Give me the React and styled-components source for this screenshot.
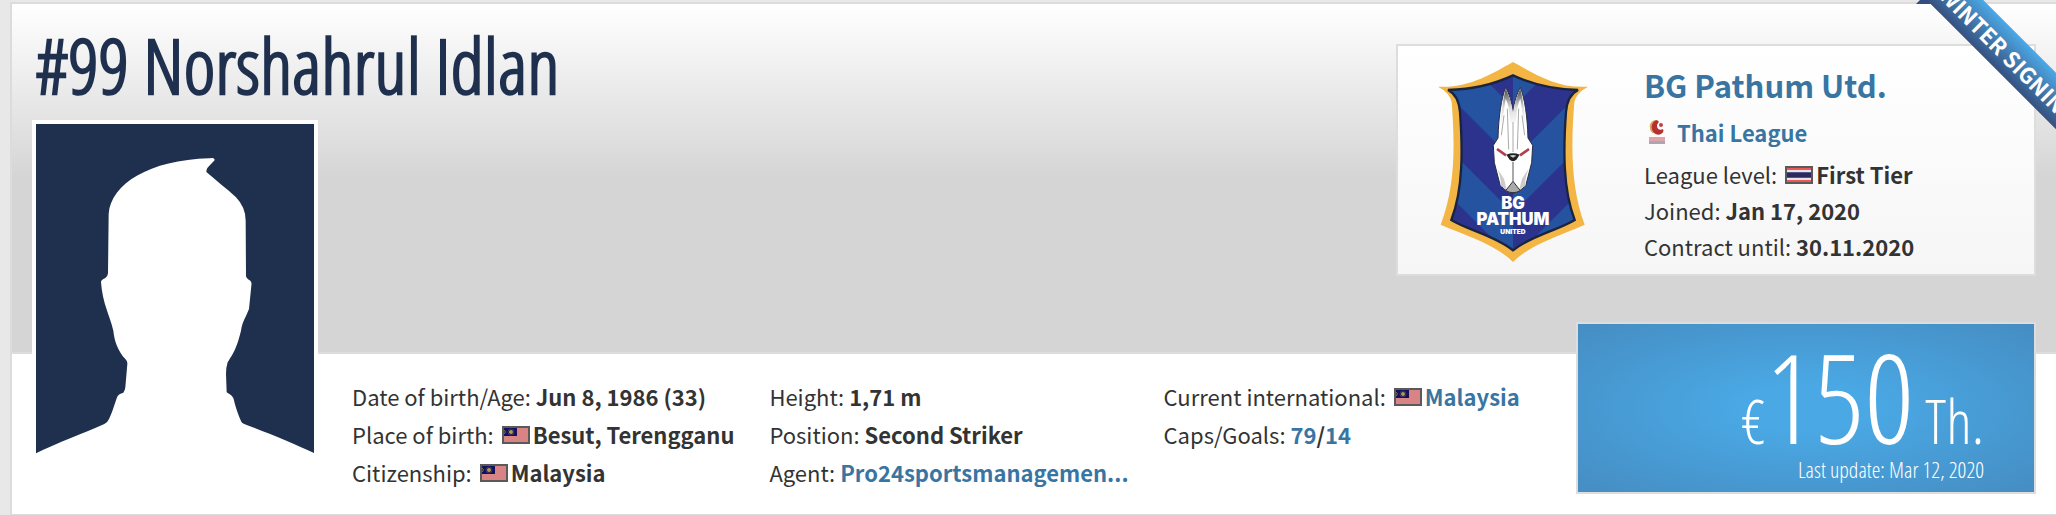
import React from 'react';

import styled, { createGlobalStyle } from 'styled-components';

const GlobalStyle = createGlobalStyle`
    * {
        box-sizing: border-box;
    }

    body {
        margin: 0;
        background: #e8e8e8;
        color: #333;
        font-family: "Source Sans Pro", "Noto Sans CJK SC", sans-serif;
        font-size: 22px;
    }
`;

const Malaysia = () => (
    <Flag viewBox="0 0 24 14" preserveAspectRatio="none" role="img" aria-label="Malaysia">
        <rect width="24" height="14" fill="#d98484" />
        <rect width="13" height="8" fill="#11115e" />
        <path d="M0 2Q3 4 0 6" fill="none" stroke="#8a7a3c" strokeWidth="1" />
        <circle cx="7" cy="4" r="2" fill="#b59a45" />
        <circle cx="7" cy="4" r="3" fill="none" stroke="#3b3560" strokeWidth="1" />
    </Flag>
);

const Thailand = () => (
    <Flag viewBox="0 0 24 14" preserveAspectRatio="none" role="img" aria-label="Thailand">
        <rect width="24" height="14" fill="#e85a55" />
        <rect y="2" width="24" height="10" fill="#e9e3e8" />
        <rect y="4" width="24" height="6" fill="#57528a" />
        <rect y="5" width="24" height="4" fill="#2b2a5c" />
    </Flag>
);

const LeagueLogo = () => (
    <LeagueMark viewBox="0 0 18 26" aria-hidden="true">
        <path d="M2 9C1 5 4 1 8 1L7 5C5 8 6 12 9 14C5 15 2 13 2 9Z" fill="#dca25a" />
        <path d="M9 1C5 2 3 6 4 10C5 14 9 17 13 15C15 14 16 12 15 10C12 12 9 10 9 7C9 5 10 4 11 3Z" fill="#b5302f" />
        <circle cx="13" cy="6" r="2" fill="#c2403d" />
        <rect x="1" y="18" width="16" height="4" fill="#e0a3a6" />
        <rect x="1" y="22" width="16" height="3" fill="#a9a5bb" />
    </LeagueMark>
);

const Portrait = () => (
    <svg viewBox="0 0 834 1083" role="img" aria-label="Norshahrul Idlan">
        <rect width="834" height="1083" fill="#1f304e" />
        <path
            fill="#fff"
            d="M0 988C60 958 150 925 205 900Q215 895 219 885C232 860 238 830 245 816Q248 810 262 806Q267 800 268 790L274 720Q275 712 268 705C245 680 235 650 232 620C220 570 200 540 195 475Q194 468 208 462Q215 458 216 448L218 270C225 180 340 108 520 103L530 102Q540 105 533 112L520 125Q508 135 512 145C540 170 570 192 600 220Q629 250 629 290L630 455Q630 463 643 470Q648 475 646 485L639 555C625 590 620 590 615 620C600 680 590 690 575 715Q570 730 570 750L572 805Q590 815 593 825C600 855 610 880 616 893Q618 898 640 906C710 932 780 962 834 987V1083H0Z"
        />
    </svg>
);

const Crest = () => (
    <CrestArt viewBox="0 0 450 600" role="img" aria-label="BG Pathum Utd.">
        <defs>
            <clipPath id="shield">
                <path d="M225 40C170 66 100 82 30 84Q62 100 66 150C74 260 76 380 40 474C90 505 170 520 225 565C280 520 360 505 410 474C374 380 376 260 384 150Q388 100 420 84C350 82 280 66 225 40Z" />
            </clipPath>
            <linearGradient id="ear" x1="0" y1="0" x2="0" y2="1">
                <stop offset="0" stopColor="#444" />
                <stop offset="0.5" stopColor="#ddd" />
                <stop offset="1" stopColor="#fff" />
            </linearGradient>
        </defs>
        <path
            fill="#f3b544"
            d="M225 0C160 36 90 80 0 74Q35 92 41 120C50 240 54 370 8 488C80 520 170 545 225 600C280 545 370 520 440 488C396 370 400 240 409 120Q415 92 450 74C360 80 290 36 225 0Z"
        />
        <g clipPath="url(#shield)">
            <rect width="450" height="600" fill="#2b338c" />
            <path d="M0-89L225 136V293L0 68ZM0 228L225 453V591L0 366Z" fill="#2553a0" />
            <path d="M450-89L225 136V0ZM450 68L225 293V453L450 228ZM450 366L225 591V620H450Z" fill="#2553a0" />
        </g>
        <path
            fill="none"
            stroke="#1a2440"
            strokeWidth="7"
            d="M225 40C170 66 100 82 30 84Q62 100 66 150C74 260 76 380 40 474C90 505 170 520 225 565C280 520 360 505 410 474C374 380 376 260 384 150Q388 100 420 84C350 82 280 66 225 40Z"
        />
        <path
            fill="#fff"
            stroke="#252c4a"
            strokeWidth="3"
            d="M203 76C190 110 182 160 180 228L166 250L169 302L186 368Q205 392 225 393Q245 392 264 368L281 302L284 250L270 228C268 160 260 110 247 76C236 96 228 120 225 150C222 120 214 96 203 76Z"
        />
        <path d="M203 80Q190 130 188 195Q198 150 203 110Q214 130 216 180L225 185V150Q218 110 203 80ZM247 80Q260 130 262 195Q252 150 247 110Q236 130 234 180L225 185V150Q232 110 247 80Z" fill="url(#ear)" />
        <path d="M208 140L212 262M242 140L238 262M225 180V270M198 160L190 220M252 160L260 220" stroke="#aaa" strokeWidth="3" fill="none" />
        <path d="M177 261L204 280M273 261L246 280" stroke="#b0404c" strokeWidth="8" />
        <path d="M205 278Q225 270 245 278L236 292Q225 304 214 292Z" fill="#222" />
        <path d="M215 281Q225 277 235 281L225 287Z" fill="#ccc" />
        <path d="M225 300V358" stroke="#555" strokeWidth="3" />
        <path d="M178 320Q190 350 188 372L206 382L198 350ZM272 320Q260 350 262 372L244 382L252 350Z" fill="#ccc" />
        <path d="M225 358L203 386Q225 398 247 386Z" fill="#aaa" stroke="#333" strokeWidth="3" />
        <CrestText x="225" y="442" fontSize="50">BG</CrestText>
        <CrestText x="225" y="490" fontSize="50">PATHUM</CrestText>
        <CrestText x="225" y="516" fontSize="20">UNITED</CrestText>
    </CrestArt>
);

const App = () => {
    return (
        <Page>
            <GlobalStyle />
            <Profile>
                <Header>
                    <Name>#99 Norshahrul Idlan</Name>
                    <ClubCard>
                        <Crest />
                        <div>
                            <ClubName><Link href="#club">BG Pathum Utd.</Link></ClubName>
                            <League>
                                <LeagueLogo />
                                <Link href="#league">Thai League</Link>
                            </League>
                            <ClubRow>League level: <Thailand /><b>First Tier</b></ClubRow>
                            <ClubRow>Joined: <b>Jan 17, 2020</b></ClubRow>
                            <ClubRow>Contract until: <b>30.11.2020</b></ClubRow>
                        </div>
                    </ClubCard>
                </Header>
                <Details>
                    <Photo><Portrait /></Photo>
                    <Facts>
                        <div>
                            <Fact>Date of birth/Age: <b>Jun 8, 1986 (33)</b></Fact>
                            <Fact>Place of birth: <Malaysia /><b>Besut, Terengganu</b></Fact>
                            <Fact>Citizenship: <Malaysia /><b>Malaysia</b></Fact>
                        </div>
                        <div>
                            <Fact>Height: <b>1,71 m</b></Fact>
                            <Fact>Position: <b>Second Striker</b></Fact>
                            <Fact>Agent: <Link href="#agent">Pro24sportsmanagemen...</Link></Fact>
                        </div>
                        <div>
                            <Fact>Current international: <Malaysia /><Link href="#malaysia">Malaysia</Link></Fact>
                            <Fact>Caps/Goals: <Link href="#caps">79</Link><b>/</b><Link href="#goals">14</Link></Fact>
                        </div>
                    </Facts>
                    <MarketValue>
                        <Amount><Unit>€</Unit>150<Unit> Th.</Unit></Amount>
                        <Updated>Last update: Mar 12, 2020</Updated>
                    </MarketValue>
                </Details>
                <RibbonFold />
                <Ribbon>WINTER SIGNING</Ribbon>
            </Profile>
        </Page>
    );
}

const Page = styled.main`
    padding: 2px 0 0 10px;
    overflow: hidden;
`;

const Profile = styled.section`
    position: relative;
    background: #fff;
    border: 2px solid #dcdcdc;
    border-right: 0;
    border-bottom-width: 1px;
`;

const Header = styled.header`
    display: flex;
    justify-content: space-between;
    align-items: flex-start;
    padding: 20px 20px 76px 24px;
    border-bottom: 2px solid #ddd;
    background: linear-gradient(#fff, #d5d5d5 50%);
`;

const Name = styled.h1`
    margin: 0;
    color: #1f304e;
    font-family: "Open Sans Condensed Light", "Open Sans Condensed", sans-serif;
    font-size: 76px;
    font-weight: 700;
    line-height: 82px;
    white-space: nowrap;
`;

const ClubCard = styled.section`
    display: flex;
    gap: 56px;
    width: 640px;
    margin-top: 20px;
    padding: 16px 40px 12px;
    border: 2px solid #ddd;
    background: linear-gradient(#fff, #f6f6f6);
    white-space: nowrap;
`;

const CrestArt = styled.svg`
    flex: none;
    width: 150px;
    height: 200px;
`;

const CrestText = styled.text`
    fill: #fff;
    font-family: Inter, sans-serif;
    font-weight: 900;
    text-anchor: middle;
`;

const Link = styled.a`
    color: #3975a3;
    font-weight: 700;
    text-decoration: none;
`;

const ClubName = styled.h2`
    height: 46px;
    margin: 0;
    font-size: 31px;
    line-height: 46px;
`;

const League = styled.div`
    display: flex;
    align-items: center;
    gap: 11px;
    height: 48px;
    padding: 0 0 0 4px;
`;

const LeagueMark = styled.svg`
    width: 18px;
    height: 26px;
`;

const ClubRow = styled.div`
    height: 36px;
    line-height: 36px;

    &:last-child {
        height: 34px;
    }
`;

const Flag = styled.svg`
    width: 28px;
    height: 18px;
    margin: 0 3px;
    border: 2px solid #5a5a5a;
    vertical-align: baseline;
`;

const Details = styled.div`
    display: flex;
    align-items: flex-start;
    padding: 0 20px 20px;
`;

const Photo = styled.figure`
    flex: none;
    width: 286px;
    margin: -234px 34px 0 0;
    border: 4px solid #fff;

    svg {
        display: block;
        width: 100%;
    }
`;

const Facts = styled.div`
    display: flex;
    flex: 1;
    gap: 35px;
    padding-top: 23px;
    white-space: nowrap;
`;

const Fact = styled.div`
    line-height: 38px;
`;

const MarketValue = styled.section`
    flex: none;
    width: 460px;
    margin-top: -32px;
    padding: 16px 50px 6px;
    border: 2px solid #ddd;
    background: radial-gradient(#4aa8e4 20%, #458bc0 105%);
    color: #fff;
    font-family: "Open Sans Condensed Light", "Open Sans Condensed", sans-serif;
    text-align: right;
    white-space: nowrap;
`;

const Amount = styled.div`
    font-size: 124px;
    line-height: 112px;
`;

const Unit = styled.span`
    font-size: 60px;
    line-height: 60px;
`;

const Updated = styled.div`
    font-size: 22px;
    line-height: 34px;
`;

const Ribbon = styled.div`
    position: absolute;
    top: 30px;
    right: -103px;
    width: 300px;
    height: 40px;
    background: linear-gradient(#4ca9e6, #36507f);
    color: #fff;
    font-weight: 700;
    line-height: 40px;
    text-align: center;
    transform: rotate(45deg);
`;

const RibbonFold = styled.div`
    position: absolute;
    top: -4px;
    right: 122px;
    width: 18px;
    height: 4px;
    background: #344e7f;
    clip-path: polygon(4px 0, 100% 0, 100% 100%, 0 100%);
`;

export default App;
